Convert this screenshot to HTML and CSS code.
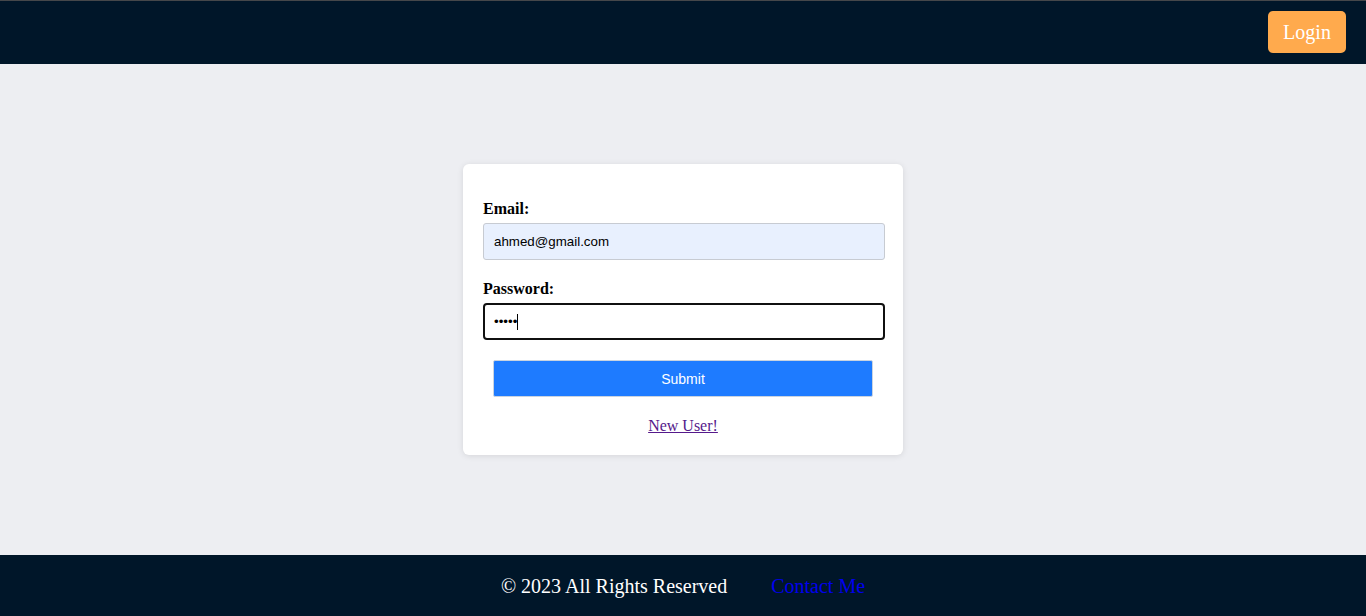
FILE: index.html
```html
<!DOCTYPE html>
<html>
<head>
<meta charset="utf-8">
<link rel="stylesheet" href="styles.css">
</head>
<body>
<div class="page">
  <header class="topbar">
    <button class="login-btn">Login</button>
  </header>
  <main class="main">
    <form class="card">
      <label class="field-label" for="email">Email:</label>
      <input class="field email" id="email" type="email" value="ahmed@gmail.com">
      <label class="field-label pw-label" for="pw">Password:</label>
      <div class="pw-wrap">
        <input class="field pw" id="pw" type="password" value="12345">
        <span class="caret"></span>
      </div>
      <button type="button" class="submit">Submit</button>
      <div class="link-row"><a class="new-user" href="#">New User!</a></div>
    </form>
  </main>
  <footer class="footer">
    <span class="copy">© 2023 All Rights Reserved</span>
    <a class="contact" href="#x">Contact Me</a>
  </footer>
</div>
</body>
</html>
```
FILE: styles.css
```css
html, body {
  margin: 0;
  padding: 0;
}
body {
  font-family: "Liberation Serif", "Times New Roman", serif;
  background: #edeef2;
}
.page {
  height: 616px;
  display: flex;
  flex-direction: column;
}
.topbar {
  height: 63px;
  border-top: 1px solid #45474a;
  background: #001629;
  display: flex;
  justify-content: flex-end;
  align-items: center;
  padding-right: 20px;
}
.login-btn {
  width: 78px;
  height: 42px;
  margin-bottom: 1px;
  background: #ffaa4d;
  color: #fff;
  border: none;
  border-radius: 5px;
  font-family: "Liberation Serif", serif;
  font-size: 20px;
  padding: 0;
}
.main {
  flex: 1;
  display: flex;
  justify-content: center;
  align-items: center;
}
.card {
  width: 440px;
  box-sizing: border-box;
  background: #fff;
  border-radius: 6px;
  padding: 36px 18px 20px 20px;
  box-shadow: 0 1px 6px rgba(0, 0, 0, 0.1);
  display: flex;
  flex-direction: column;
}
.field-label {
  font-weight: bold;
  font-size: 16px;
  line-height: 18px;
  color: #000;
  margin-bottom: 5px;
}
.pw-label {
  margin-top: 20px;
}
.field {
  box-sizing: border-box;
  width: 402px;
  height: 37px;
  font-family: "Liberation Sans", Arial, sans-serif;
  font-size: 13.33px;
  padding: 0 10px;
  margin: 0;
  outline: none;
}
.email {
  background: #e8f0fe;
  border: 1px solid #c7cbd2;
  border-radius: 3px;
  color: #000;
}
.pw-wrap {
  position: relative;
  width: 402px;
}
.pw {
  background: #fff;
  border: 2px solid #101010;
  border-radius: 4px;
  padding: 0 9px;
  color: #000;
}
.caret {
  position: absolute;
  left: 34px;
  top: 11px;
  width: 1px;
  height: 16px;
  background: #000;
}
.submit {
  width: 380px;
  height: 37px;
  margin: 20px 0 0 10px;
  background: #1e7bff;
  color: #fff;
  border: 1px solid #c9d3e0;
  border-radius: 2px;
  font-family: "Liberation Sans", Arial, sans-serif;
  font-size: 14px;
  padding: 0;
}
.link-row {
  margin-top: 20px;
  margin-right: 2px;
  text-align: center;
  font-size: 16px;
  line-height: 18px;
}
.new-user {
  color: #551a8b;
}
.footer {
  height: 61px;
  background: #001629;
  display: flex;
  justify-content: center;
  align-items: center;
  gap: 44px;
  font-size: 20px;
  padding-top: 2px;
  box-sizing: border-box;
}
.copy {
  color: #fff;
}
.contact {
  color: #0000ee;
  text-decoration: none;
}
```
